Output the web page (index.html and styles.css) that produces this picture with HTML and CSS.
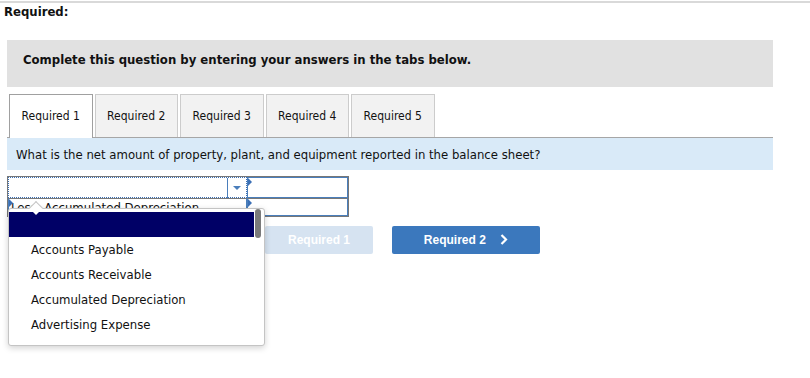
FILE: index.html
```html
<!DOCTYPE html>
<html lang="en">
<head>
    <meta charset="UTF-8">
    <title>Required</title>
    <link rel="stylesheet" href="styles.css">
</head>
<body>

<div class="topline"></div>
<h3 class="req-title">Required:</h3>

<div class="page">
    <!-- Instructions -->
    <div class="instructions">Complete this question by entering your answers in the tabs below.</div>

    <!-- Tabs -->
    <div class="tabs">
        <div class="tab active">Required 1</div>
        <div class="tab">Required 2</div>
        <div class="tab">Required 3</div>
        <div class="tab">Required 4</div>
        <div class="tab">Required 5</div>
    </div>

    <div class="question">What is the net amount of property, plant, and equipment reported in the balance sheet?</div>

    <!-- Answer table -->
    <div class="answer-area">
        <table class="answers">
            <tr class="row-1">
                <td class="label-cell focused">
                    <div class="select-box"><span class="sep"></span><span class="arrow"></span></div>
                </td>
                <td class="value-cell"><span class="flag"></span></td>
            </tr>
            <tr class="row-2">
                <td class="label-cell"><span class="flag"></span><span class="cell-text">Less: Accumulated Depreciation</span></td>
                <td class="value-cell"><span class="flag"></span></td>
            </tr>
        </table>

        <div class="nav-buttons">
            <button class="nav-btn disabled">Required 1</button>
            <button class="nav-btn next">Required 2
                <svg class="chev" width="8" height="11" viewBox="0 0 8 11"><polyline points="1.5,1 6,5.5 1.5,10" fill="none" stroke="#fff" stroke-width="2.2"/></svg>
            </button>
        </div>

        <!-- Open dropdown list -->
        <div class="dropdown">
            <div class="notch"></div>
            <div class="option selected"></div>
            <div class="option">Accounts Payable</div>
            <div class="option">Accounts Receivable</div>
            <div class="option">Accumulated Depreciation</div>
            <div class="option">Advertising Expense</div>
            <div class="scroll-thumb"></div>
        </div>
    </div>
</div>

</body>
</html>
```

FILE: styles.css
```css
body {
    margin: 0;
    min-height: 378px;
    font-family: "DejaVu Sans Condensed", "DejaVu Sans", Verdana, sans-serif;
    font-stretch: condensed;
    font-size: 13px;
    color: #111;
    background: #fff;
}
.topline {
    margin-top: 1px;
    border-top: 2px solid #d9d9d9;
}
.req-title {
    margin: 1px 0 0 4px;
    font-size: 13px;
    line-height: 16px;
}
.page {
    margin: 20px 0 0 7px;
    width: 766px;
}
.instructions {
    background-color: #e1e1e1;
    height: 47px;
    line-height: 40px;
    padding-left: 16px;
    font-weight: bold;
    font-size: 13px;
}
.tabs {
    display: flex;
    gap: 2px;
    margin-top: 7px;
    padding-left: 2px;
    border-bottom: 1px solid #a6a6a6;
    height: 43px;
}
.tab {
    width: 81.5px;
    height: 42px;
    border: 1px solid #cccccc;
    border-bottom: none;
    background-color: #f2f2f2;
    text-align: center;
    line-height: 43px;
    font-size: 12px;
}
.tab.active {
    background-color: #fff;
    border-color: #a0a0a0;
    height: 43px;
    margin-bottom: -1px;
}
.question {
    background-color: #d9eaf8;
    height: 32px;
    line-height: 33px;
    padding-left: 9px;
}
.answer-area {
    position: relative;
    margin-top: 6px;
}
.answers {
    border-collapse: separate;
    border-spacing: 0;
    border: 1px solid #777;
}
.answers td {
    padding: 0;
    border: 1px solid #4a7ebb;
    position: relative;
}
.row-1 td {
    height: 19px;
}
.row-2 td {
    height: 16px;
    border-top-color: #777;
}
.label-cell {
    width: 237px;
}
.value-cell {
    width: 99px;
}
.label-cell.focused {
    border: 1px dotted #3a6fb5;
}
.select-box {
    position: relative;
    height: 19px;
}
.sep {
    position: absolute;
    right: 18px;
    top: 0;
    height: 20px;
    border-left: 1px solid #4a7ebb;
}
.arrow {
    position: absolute;
    right: 5px;
    top: 8px;
    border-left: 4px solid transparent;
    border-right: 4px solid transparent;
    border-top: 4px solid #4a7ebb;
}
.flag {
    position: absolute;
    left: 0;
    top: 0;
    border-top: 4px solid transparent;
    border-bottom: 4px solid transparent;
    border-left: 4px solid #3a6fb5;
}
.cell-text {
    display: block;
    padding-left: 2px;
    line-height: 18px;
    height: 16px;
    overflow: hidden;
}
.nav-buttons {
    display: flex;
    gap: 19px;
    margin: 9px 0 0 258px;
}
.nav-btn {
    height: 28px;
    border: none;
    border-radius: 2px;
    color: #fff;
    font-family: "Liberation Sans", Arial, sans-serif;
    font-weight: bold;
    font-size: 12px;
}
.nav-btn.disabled {
    width: 108px;
    background-color: #d6e3f1;
}
.nav-btn.next {
    width: 148px;
    background-color: #3b78bd;
}
.chev {
    margin-left: 11px;
    vertical-align: -1px;
}
.dropdown {
    position: absolute;
    left: 1px;
    top: 32px;
    width: 255px;
    height: 133px;
    background: #fff;
    border: 1px solid #c4c4c4;
    border-radius: 3px;
    box-shadow: 0 2px 6px rgba(0, 0, 0, 0.18);
    padding-top: 3px;
}
.notch {
    position: absolute;
    left: 22px;
    top: -6px;
    width: 9px;
    height: 9px;
    background: #fff;
    border-left: 1px solid #c4c4c4;
    border-top: 1px solid #c4c4c4;
    transform: rotate(45deg);
}
.option {
    height: 25px;
    line-height: 25px;
    padding-left: 22px;
    margin-right: 10px;
}
.option.selected {
    background-color: #000066;
}
.scroll-thumb {
    position: absolute;
    right: 3px;
    top: 0;
    width: 6px;
    height: 29px;
    border-radius: 3px;
    background-color: #7a7a7a;
}
```
